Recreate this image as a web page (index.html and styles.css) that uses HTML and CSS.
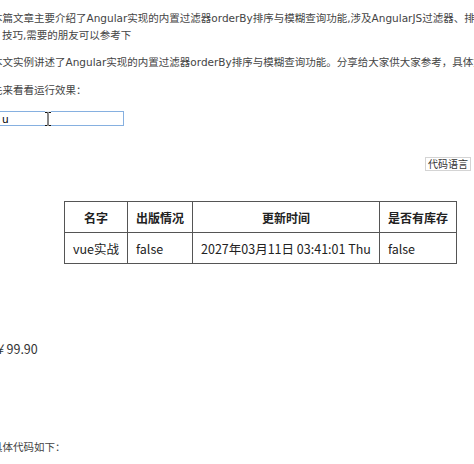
FILE: index.html
```html
<!DOCTYPE html>
<html lang="zh-CN">
<head>
<meta charset="utf-8">
<title>Angular orderBy</title>
<link rel="stylesheet" href="styles.css">
</head>
<body>
<div class="page">
  <div class="summary">
    <div class="line">本篇文章主要介绍了Angular实现的内置过滤器orderBy排序与模糊查询功能,涉及AngularJS过滤器、排序</div>
    <div class="line indent">技巧,需要的朋友可以参考下</div>
  </div>
  <p class="para">本文实例讲述了Angular实现的内置过滤器orderBy排序与模糊查询功能。分享给大家供大家参考，具体如下：</p>
  <p class="para gap">先来看看运行效果：</p>
  <div class="search">
    <input class="query" type="text" value="u">
    <svg class="ibeam" width="8" height="16" viewBox="0 0 8 16" aria-hidden="true">
      <path d="M1 1.5h2.2L4 2.3 4.8 1.5H7M4 2.3v11.4M1 14.5h2.2L4 13.7l.8.8H7" fill="none" stroke="#fff" stroke-width="2.4"/>
      <path d="M1 1.5h2.2L4 2.3 4.8 1.5H7M4 2.3v11.4M1 14.5h2.2L4 13.7l.8.8H7" fill="none" stroke="#111" stroke-width="1"/>
    </svg>
  </div>
  <div class="toolbar">
    <button class="lang" type="button">代码语言</button>
  </div>
  <table class="books">
    <thead>
      <tr><th>名字</th><th>出版情况</th><th>更新时间</th><th>是否有库存</th></tr>
    </thead>
    <tbody>
      <tr><td>vue实战</td><td>false</td><td>2027年03月11日 03:41:01 Thu</td><td>false</td></tr>
    </tbody>
  </table>
  <p class="price">￥99.90</p>
  <p class="para tail">具体代码如下：</p>
</div>
</body>
</html>
```
FILE: styles.css
```css
html, body {
  margin: 0;
  padding: 0;
  background: #fff;
}
body {
  width: 474px;
  height: 464px;
  overflow: hidden;
}
.page {
  margin-left: -8px;
  padding-top: 10px;
  font-family: "DejaVu Sans", "Noto Sans CJK SC", sans-serif;
  font-size: 10.5px;
  line-height: 17px;
  color: #444;
}
.line, .para {
  white-space: nowrap;
}
.indent {
  padding-left: 10px;
}
.para {
  margin: 10px 0 0;
}
.para.gap {
  margin-top: 11px;
}
.search {
  position: relative;
  margin-top: 12px;
  height: 15px;
}
.query {
  box-sizing: border-box;
  width: 132px;
  height: 15px;
  margin: 0;
  padding: 0 0 0 9px;
  border: 1px solid #86b0e0;
  font: 10.5px "DejaVu Sans", sans-serif;
  color: #000;
  outline: none;
  display: block;
}
.ibeam {
  position: absolute;
  left: 52px;
  top: 0;
}
.toolbar {
  display: flex;
  justify-content: flex-end;
  margin-top: 31px;
  padding-right: 3px;
}
.lang {
  box-sizing: border-box;
  height: 14px;
  margin: 0;
  padding: 0 2px;
  border: 1px solid #d4d4d4;
  background: #fff;
  font: 10px/12px "Noto Sans CJK SC", sans-serif;
  color: #333;
}
.books {
  margin: 30px 0 0 72px;
  border-collapse: collapse;
  font-family: "Noto Sans CJK SC", sans-serif;
  font-size: 12.5px;
  color: #222;
}
.books th, .books td {
  border: 1px solid #555;
  height: 31px;
  padding: 0 8px;
  box-sizing: border-box;
  white-space: nowrap;
}
.books th {
  font-size: 12px;
  font-weight: bold;
  text-align: center;
}
.books td {
  text-align: left;
}
.price {
  margin: 76px 0 0;
  font-family: "Noto Sans CJK SC", sans-serif;
  font-size: 12.5px;
  line-height: 17px;
  color: #333;
  padding-left: 2px;
}
.para.tail {
  margin-top: 82px;
  padding-left: 0;
}
```
